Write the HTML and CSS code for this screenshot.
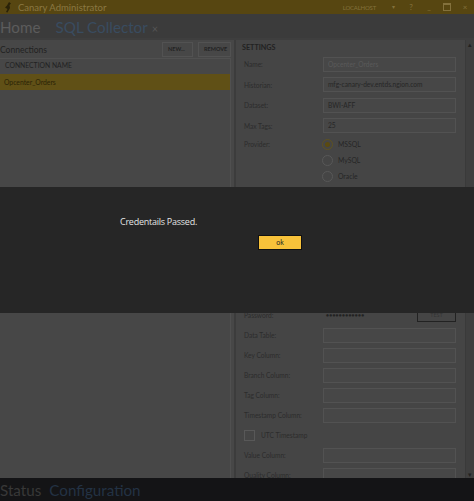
FILE: index.html
```html
<!DOCTYPE html>
<html>
<head>
<meta charset="utf-8">
<link rel="stylesheet" href="styles.css">
</head>
<body>
<div class="app">
  <header class="titlebar">
    <div class="brand">
      <svg class="logo" width="8" height="11" viewBox="0 0 8 11"><path d="M5 0 L7 1.5 L5.5 3 L6 6 L3.5 10.5 L2 10 L3.5 7 L1 5.5 L3 3.5 Z" fill="#2a2208"/></svg>
      <span class="apptitle">Canary Administrator</span>
    </div>
    <div class="winctl">
      <span class="host">LOCALHOST</span>
      <span class="ctl caret">▾</span>
      <span class="ctl">?</span>
      <span class="ctl">_</span>
      <span class="ctl box"></span>
      <span class="ctl">×</span>
    </div>
  </header>
  <nav class="tabs">
    <span class="tab home">Home</span>
    <span class="tab active">SQL Collector</span>
    <span class="tabclose">×</span>
  </nav>
  <main class="body">
    <section class="connections">
      <div class="connhead">
        <span class="conntitle">Connections</span>
        <div class="btns">
          <span class="btn">NEW...</span>
          <span class="btn">REMOVE</span>
        </div>
      </div>
      <div class="list">
        <div class="listhead">CONNECTION NAME</div>
        <div class="listrow sel">Opcenter_Orders</div>
      </div>
    </section>
    <section class="settings">
      <div class="form">
        <div class="sethead">SETTINGS</div>
        <div class="row"><span class="lbl">Name:</span><span class="inp dis">Opcenter_Orders</span></div>
        <div class="row"><span class="lbl">Historian:</span><span class="inp">mfg-canary-dev.entds.ngion.com</span></div>
        <div class="row"><span class="lbl">Dataset:</span><span class="inp">BWI-AFF</span></div>
        <div class="row"><span class="lbl">Max Tags:</span><span class="inp">25</span></div>
        <div class="radios">
          <div class="radiorow"><span class="lbl">Provider:</span><span class="radio on"></span><span class="rtxt">MSSQL</span></div>
          <div class="radiorow"><span class="lbl"></span><span class="radio"></span><span class="rtxt">MySQL</span></div>
          <div class="radiorow"><span class="lbl"></span><span class="radio"></span><span class="rtxt">Oracle</span></div>
        </div>
        <div class="hidden">
          <div class="row hrow"><span class="lbl">Server:</span><span class="inp"></span></div>
          <div class="row hrow"><span class="lbl">Database:</span><span class="inp"></span></div>
          <div class="row hrow"><span class="lbl">Port:</span><span class="inp"></span></div>
          <div class="row hrow"><span class="lbl">Timeout:</span><span class="inp"></span></div>
          <div class="row hrow"><span class="lbl">Authentication:</span><span class="inp"></span></div>
          <div class="row hrow"><span class="lbl">Username:</span><span class="inp"></span></div>
        </div>
        <div class="row hrow"><span class="lbl">Password:</span><span class="pw">●●●●●●●●●●●●</span><span class="testbtn">TEST</span></div>
        <div class="row hrow"><span class="lbl">Data Table:</span><span class="inp"></span></div>
        <div class="row hrow"><span class="lbl">Key Column:</span><span class="inp"></span></div>
        <div class="row hrow"><span class="lbl">Branch Column:</span><span class="inp"></span></div>
        <div class="row hrow"><span class="lbl">Tag Column:</span><span class="inp"></span></div>
        <div class="row hrow"><span class="lbl">Timestamp Column:</span><span class="inp"></span></div>
        <div class="row hrow chkrow"><span class="chk"></span><span class="chktxt">UTC Timestamp</span></div>
        <div class="row hrow"><span class="lbl">Value Column:</span><span class="inp"></span></div>
        <div class="row hrow"><span class="lbl">Quality Column:</span><span class="inp"></span></div>
      </div>
      <div class="scrollbar">
        <span class="arrow up">▴</span>
        <span class="thumb"></span>
        <span class="arrow down">▾</span>
      </div>
    </section>
  </main>
  <footer class="statusbar">
    <span class="stab">Status</span>
    <span class="stab cfg">Configuration</span>
  </footer>
  <div class="dialog">
    <div class="dlgmsg">Credentails Passed.</div>
    <div class="dlgbtns"><span class="okbtn">ok</span></div>
  </div>
</div>
</body>
</html>
```
FILE: styles.css
```css
* { box-sizing: border-box; margin: 0; padding: 0; }
html, body { width: 474px; height: 501px; overflow: hidden; background: #3c3c3c; }
body { font-family: "Lato", "Open Sans", sans-serif; }
.app { position: relative; width: 474px; height: 501px; display: flex; flex-direction: column; }

.titlebar { height: 14px; flex: none; background: #574611; display: flex; align-items: center; justify-content: space-between; padding: 0 0 0 4px; }
.brand { display: flex; align-items: center; gap: 6px; }
.logo { display: block; }
.apptitle { color: #8a7842; font-size: 9.5px; }
.winctl { display: flex; align-items: center; height: 14px; }
.host { color: #83713c; font-size: 6px; margin-right: 8px; letter-spacing: -0.2px; }
.ctl { color: #83713c; font-size: 8px; width: 18px; text-align: center; line-height: 14px; }
.caret { font-size: 6px; }
.box { display: flex; align-items: center; justify-content: center; }
.box::before { content: ""; width: 6px; height: 5px; border: 1px solid #83713c; border-top-width: 2px; }

.tabs { height: 24px; flex: none; background: #3b3b3b; display: flex; align-items: baseline; padding-top: 3px; }
.tab { font-size: 15.2px; line-height: 20px; }
.home { color: #5c5c5c; margin-right: 15px; }
.active { color: #394c60; }
.tabclose { color: #555; font-size: 11px; margin-left: 4px; }

.body { flex: 1; display: flex; min-height: 0; background: #3e3e3e; padding-top: 2px; }
.connections { width: 236px; flex: none; background: #474747; display: flex; flex-direction: column; border-right: 2px solid #3c3c3c; }
.connhead { height: 18px; flex: none; display: flex; align-items: center; justify-content: space-between; padding: 0 3px 0 0; }
.conntitle { color: #222; font-size: 8.5px; margin-top: 1px; }
.btns { display: flex; gap: 5px; }
.btn { height: 15px; border: 1px solid #525252; background: #474747; color: #222; font-size: 5.5px; font-weight: bold; line-height: 13px; padding: 0 5px; }
.btn:first-child { width: 31px; }
.btn:last-child { width: 33px; }
.list { flex: 1; border-top: 1px solid #505050; margin-right: 3px; border-right: 1px solid #505050; }
.listhead { height: 13px; color: #222; font-size: 6.8px; line-height: 13px; padding-left: 5px; }
.listrow { height: 16px; margin-top: 2px; line-height: 16px; padding-left: 4px; font-size: 6.8px; color: #2a2306; }
.sel { background: #605016; }

.settings { flex: 1; display: flex; background: #454545; min-height: 0; overflow: hidden; }
.form { flex: 1; padding: 0 0 0 7px; display: flex; flex-direction: column; overflow: hidden; }
.form > * { flex-shrink: 0; }
.sethead { height: 14px; color: #222; font-size: 7.2px; font-weight: bold; line-height: 14px; padding-top: 1px; margin-left: -1px; }
.row { height: 20.5px; display: flex; align-items: center; flex-shrink: 0; }
.hrow { height: 20px; }
.hidden { display: flex; flex-direction: column; }
.lbl { width: 80px; padding-left: 1px; color: #2c2c2c; font-size: 6.6px; flex: none; }
.inp { width: 133px; height: 15px; border: 1px solid #525252; background: #474747; color: #262626; font-size: 6.6px; line-height: 13px; padding-left: 4px; }
.dis { color: #5a5a5a; }
.radios { padding: 0 0 1px; display: flex; flex-direction: column; }
.radiorow { height: 16px; display: flex; align-items: center; flex-shrink: 0; }
.radio { width: 11px; height: 11px; border-radius: 50%; border: 1px solid #585858; margin-left: -1px; margin-right: 5px; display: flex; align-items: center; justify-content: center; }
.radio.on { border-color: #5e5220; }
.radio.on::before { content: ""; width: 5px; height: 5px; border-radius: 50%; background: #5a4a10; }
.rtxt { color: #262626; font-size: 6.8px; }
.pw { width: 95px; color: #222; font-size: 5px; letter-spacing: 0.2px; padding-left: 3px; }
.testbtn { width: 39px; height: 14px; border: 1px solid #222; color: #333; font-size: 5.5px; text-align: center; line-height: 12px; margin-left: -1px; }
.chkrow { padding-left: 1px; }
.chk { width: 11px; height: 11px; border: 1px solid #585858; margin-right: 6px; }
.chktxt { color: #2c2c2c; font-size: 6.6px; }

.scrollbar { width: 9px; flex: none; background: #3f3f3f; border-left: 1px solid #3a3a3a; display: flex; flex-direction: column; align-items: center; }
.arrow { color: #222; font-size: 7px; line-height: 8px; }
.thumb { flex: 1; }

.statusbar { height: 23px; flex: none; background: #141416; display: flex; align-items: center; gap: 8px; }
.stab { font-size: 15.2px; color: #383838; line-height: 22px; }
.cfg { color: #233244; }

.dialog { position: absolute; left: 0; top: 187px; width: 474px; height: 126px; background: #262626; display: flex; flex-direction: column; padding: 28px 0 0 120px; }
.dlgmsg { color: #e4e4e4; font-size: 9px; font-family: "Open Sans", sans-serif; letter-spacing: -0.25px; }
.dlgbtns { padding-left: 138px; margin-top: 7px; }
.okbtn { display: block; width: 44px; height: 15px; background: #f8c23a; border: 1px solid #111; color: #222; font-size: 7px; text-align: center; line-height: 13px; }
```
